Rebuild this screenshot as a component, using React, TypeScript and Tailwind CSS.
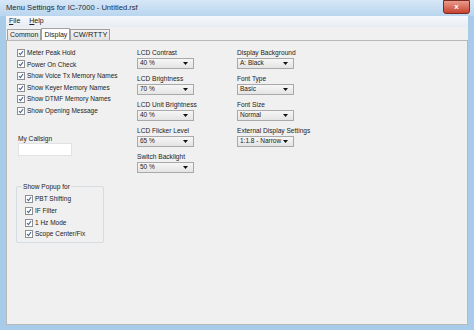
import React from 'react';

const font = { fontFamily: '"Liberation Sans", Arial, sans-serif' };

function Check({ label }: { label: string }) {
  return (
    <div className="flex h-[11.6px] items-center gap-[2px]">
      <span className="flex h-[8px] w-[8px] items-center justify-center border border-[#8f8f8f] bg-white">
        <svg width="6" height="6" viewBox="0 0 6 6">
          <path d="M1 3 L2.4 4.6 L5 1.2" stroke="#4a6590" strokeWidth="1.1" fill="none" />
        </svg>
      </span>
      <span className="whitespace-nowrap text-[6.5px] text-[#222]">{label}</span>
    </div>
  );
}

function Dropdown({ label, value }: { label: string; value: string }) {
  return (
    <div className="mb-[5px] flex flex-col">
      <span className="h-[10px] whitespace-nowrap text-[6.6px] leading-[10px] text-[#222]">{label}</span>
      <div className="flex h-[11px] w-[57px] items-center justify-between border border-[#a9a9a9] bg-gradient-to-b from-[#f6f6f6] to-[#e4e4e4] px-[2px]">
        <span className="whitespace-nowrap text-[6.5px] leading-none text-[#222]">{value}</span>
        <svg width="5" height="3" viewBox="0 0 5 3" className="mr-[3px] shrink-0">
          <path d="M0 0 H5 L2.5 3 Z" fill="#111" />
        </svg>
      </div>
    </div>
  );
}

export default function App() {
  return (
    <div className="flex h-[330px] w-[474px] flex-col bg-[#a9cbea]" style={font}>
      {/* title bar */}
      <div className="flex h-[16px] items-start justify-between bg-gradient-to-b from-[#d6e7f7] to-[#b9d5ef] pl-[6px]">
        <span className="pt-[3px] text-[7.6px] leading-[10px] text-[#1e2b3a]">
          Menu Settings for IC-7000 - Untitled.rsf
        </span>
        <div className="mr-[4px] flex h-[14px] w-[27px] items-center justify-center rounded-b-[3px] border border-[#7a2a22] bg-gradient-to-b from-[#e89a8c] to-[#c7402c]">
          <span className="text-[8px] font-bold leading-none text-white">x</span>
        </div>
      </div>

      <div className="mx-[6px] mb-[5px] flex flex-1 flex-col bg-[#f0f0f0]">
        {/* menu */}
        <div className="flex h-[11px] items-center gap-[9px] bg-gradient-to-b from-[#f6f8fb] to-[#e7edf4] pl-[3px] text-[7px] text-[#222]">
          <span><u>F</u>ile</span>
          <span><u>H</u>elp</span>
        </div>

        {/* tabs */}
        <div className="flex h-[13px] items-end pl-[1px] pt-[1px]">
          <div className="flex h-[11px] items-center border border-b-0 border-[#a0a0a0] bg-gradient-to-b from-[#f3f3f3] to-[#e2e2e2] px-[2px] text-[7px] text-[#222]">
            Common
          </div>
          <div className="-mb-px flex h-[13px] items-center border border-b-0 border-[#a0a0a0] bg-white px-[2px] text-[7px] text-[#222]">
            Display
          </div>
          <div className="flex h-[11px] items-center border border-b-0 border-[#a0a0a0] bg-gradient-to-b from-[#f3f3f3] to-[#e2e2e2] px-[2px] text-[7.5px] text-[#222]">
            CW/RTTY
          </div>
        </div>

        {/* panel */}
        <div className="flex flex-1 border border-[#b9b9b9] bg-[#f0f0f0] pl-[10px] pt-[6px]">
          <div className="flex w-[120px] flex-col">
            <Check label="Meter Peak Hold" />
            <Check label="Power On Check" />
            <Check label="Show Voice Tx Memory Names" />
            <Check label="Show Keyer Memory Names" />
            <Check label="Show DTMF Memory Names" />
            <Check label="Show Opening Message" />

            <span className="mt-[17px] ml-[1px] h-[9px] text-[6.6px] leading-[9px] text-[#222]">My Callsign</span>
            <div className="ml-[1px] h-[13px] w-[54px] border border-[#e2e2e2] bg-white" />

            <div className="relative ml-[-1px] mt-[30px] w-[88px] rounded-[2px] border border-[#d5dce2] pb-[2px] pl-[8px] pt-[7px]">
              <span className="absolute left-[5px] top-[-5px] bg-[#f0f0f0] px-[1px] text-[6.6px] leading-[9px] text-[#222]">
                Show Popup for
              </span>
              <Check label="PBT Shifting" />
              <Check label="IF Filter" />
              <Check label="1 Hz Mode" />
              <Check label="Scope Center/Fix" />
            </div>
          </div>

          <div className="flex w-[100px] flex-col pt-[1px]">
            <Dropdown label="LCD Contrast" value="40 %" />
            <Dropdown label="LCD Brightness" value="70 %" />
            <Dropdown label="LCD Unit Brightness" value="40 %" />
            <Dropdown label="LCD Flicker Level" value="65 %" />
            <Dropdown label="Switch Backlight" value="50 %" />
          </div>

          <div className="flex w-[100px] flex-col pt-[1px]">
            <Dropdown label="Display Background" value="A: Black" />
            <Dropdown label="Font Type" value="Basic" />
            <Dropdown label="Font Size" value="Normal" />
            <Dropdown label="External Display Settings" value="1:1.8 - Narrow" />
          </div>
        </div>
      </div>
    </div>
  );
}
